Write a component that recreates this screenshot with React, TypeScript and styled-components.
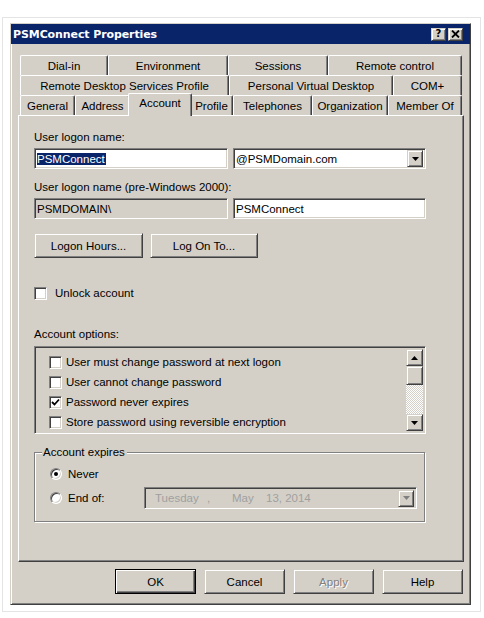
import React from "react";
import styled, { createGlobalStyle, css } from "styled-components";

const FACE = "#d4d0c8";
const SHADOW = "#808080";
const DARK = "#404040";
const NAVY = "#0a246a";

const GlobalStyle = createGlobalStyle`
  html, body {
    margin: 0;
    background: #ffffff;
  }
  body {
    padding: 17px 0 0 2px;
    font-family: "Liberation Sans", Arial, sans-serif;
    font-size: 11.5px;
    color: #000;
  }
`;

const raised = css`
  border: 1px solid;
  border-color: ${FACE} ${DARK} ${DARK} ${FACE};
  box-shadow: inset 1px 1px #ffffff, inset -1px -1px ${SHADOW};
  background: ${FACE};
`;

const sunken = css`
  border: 1px solid;
  border-color: ${SHADOW} #ffffff #ffffff ${SHADOW};
  box-shadow: inset 1px 1px ${DARK}, inset -1px -1px ${FACE};
`;

const Frame = styled.div`
  box-sizing: border-box;
  width: 479px;
  height: 595px;
  border: 1px solid #e4e4e4;
  padding: 5px 9px 6px 7px;
`;

const Dialog = styled.div`
  box-sizing: border-box;
  width: 461px;
  height: 582px;
  display: flex;
  flex-direction: column;
  ${raised};
`;

const TitleBar = styled.div`
  height: 20px;
  background: ${NAVY};
  display: flex;
  align-items: center;
  padding: 0 7px 0 2px;
  flex-shrink: 0;
`;

const Title = styled.span`
  flex: 1;
  color: #fff;
  font-family: "DejaVu Sans", Verdana, sans-serif;
  font-weight: bold;
  font-size: 11px;
  letter-spacing: -0.1px;
`;

const CaptionButton = styled.div`
  box-sizing: border-box;
  width: 15px;
  height: 13px;
  margin-left: 2px;
  display: flex;
  align-items: center;
  justify-content: center;
  font-family: "DejaVu Sans", Verdana, sans-serif;
  font-weight: bold;
  font-size: 10px;
  line-height: 1;
  ${raised};
`;

const Body = styled.div`
  padding: 11px 6px 0 7px;
  display: flex;
  flex-direction: column;
`;

const TabStrip = styled.div`
  margin: 0 2px;
  display: flex;
  flex-direction: column;
`;

const TabRow = styled.div`
  display: flex;
  height: 20px;
`;

const Tab = styled.div<{ $w: number; $active?: boolean }>`
  box-sizing: border-box;
  width: ${(p) => p.$w}px;
  height: 20px;
  display: flex;
  align-items: center;
  justify-content: center;
  white-space: nowrap;
  background: ${FACE};
  border-left: 1px solid #fff;
  border-top: 1px solid #fff;
  border-right: 1px solid ${DARK};
  box-shadow: inset -1px 0 ${SHADOW};
  border-radius: 2px 2px 0 0;
  padding-top: 1px;
  ${(p) =>
    p.$active &&
    css`
      position: relative;
      z-index: 1;
      width: ${p.$w + 4}px;
      height: 23px;
      margin: -2px -2px 0;
      padding-top: 0;
      padding-bottom: 4px;
    `}
`;

const Panel = styled.div`
  box-sizing: border-box;
  height: 447px;
  border: 1px solid;
  border-color: #fff ${DARK} ${DARK} #fff;
  box-shadow: inset -1px -1px ${SHADOW};
  padding: 14px 37px 0 15px;
  display: flex;
  flex-direction: column;
`;

const Label = styled.div<{ $mt?: number }>`
  line-height: 14px;
  height: 14px;
  margin-top: ${(p) => p.$mt ?? 0}px;
  white-space: nowrap;
`;

const FieldRow = styled.div<{ $mt?: number }>`
  display: grid;
  grid-template-columns: 194px 1fr;
  gap: 5px;
  margin-top: ${(p) => p.$mt ?? 0}px;
`;

const Field = styled.div<{ $disabled?: boolean }>`
  box-sizing: border-box;
  height: 21px;
  display: flex;
  align-items: center;
  padding: 0 2px;
  background: ${(p) => (p.$disabled ? FACE : "#fff")};
  white-space: nowrap;
  ${sunken};
`;

const Selected = styled.span`
  background: ${NAVY};
  color: #fff;
  line-height: 16px;
  padding: 0 1px 0 0;
`;

const FieldText = styled.span`
  flex: 1;
`;

const ArrowButton = styled.div<{ $w?: number; $h?: number }>`
  box-sizing: border-box;
  width: ${(p) => p.$w ?? 16}px;
  height: ${(p) => p.$h ?? 17}px;
  display: flex;
  align-items: center;
  justify-content: center;
  flex-shrink: 0;
  ${raised};
`;

const ButtonRow = styled.div<{ $mt: number; $gap: number; $end?: boolean }>`
  display: flex;
  gap: ${(p) => p.$gap}px;
  margin-top: ${(p) => p.$mt}px;
  margin-right: ${(p) => (p.$end ? 1 : 0)}px;
  justify-content: ${(p) => (p.$end ? "flex-end" : "flex-start")};
`;

const Button = styled.div<{ $w: number; $default?: boolean; $disabled?: boolean }>`
  box-sizing: border-box;
  width: ${(p) => p.$w}px;
  height: 25px;
  display: flex;
  align-items: center;
  justify-content: center;
  ${raised};
  ${(p) =>
    p.$default &&
    css`
      border-color: #000;
      box-shadow: inset 1px 1px #fff, inset -1px -1px ${DARK}, inset -2px -2px ${SHADOW};
    `}
  color: ${(p) => (p.$disabled ? SHADOW : "#000")};
  text-shadow: ${(p) => (p.$disabled ? "1px 1px #fff" : "none")};
`;

const CheckRow = styled.div<{ $gap: number; $h: number; $mt?: number }>`
  display: flex;
  align-items: center;
  gap: ${(p) => p.$gap}px;
  height: ${(p) => p.$h}px;
  margin-top: ${(p) => p.$mt ?? 0}px;
  white-space: nowrap;
`;

const Box = styled.div`
  box-sizing: border-box;
  width: 13px;
  height: 13px;
  background: #fff;
  display: flex;
  align-items: center;
  justify-content: center;
  flex-shrink: 0;
  ${sunken};
`;

const ListBox = styled.div`
  box-sizing: border-box;
  height: 88px;
  margin-top: 5px;
  display: flex;
  ${sunken};
  padding: 2px;
`;

const ListItems = styled.div`
  flex: 1;
  padding: 3px 0 0 12px;
`;

const ScrollBar = styled.div`
  width: 17px;
  display: flex;
  flex-direction: column;
`;

const Thumb = styled.div`
  box-sizing: border-box;
  height: 19px;
  ${raised};
`;

const Track = styled.div`
  flex: 1;
  background-color: #fff;
  background-image: conic-gradient(${FACE} 25%, #fff 0 50%, ${FACE} 0 75%, #fff 0);
  background-size: 2px 2px;
`;

const GroupBox = styled.fieldset`
  margin: 11px 1px 0 0;
  padding: 4px 13px 12px 15px;
  border: 1px solid ${SHADOW};
  box-shadow: inset 1px 1px #fff, 1px 1px #fff;
  min-width: 0;
`;

const Legend = styled.legend`
  margin-left: -8px;
  padding: 0 2px 0 1px;
  line-height: 14px;
  background: ${FACE};
`;

const RadioRow = styled.div<{ $mt?: number }>`
  display: grid;
  grid-template-columns: 94px 1fr;
  align-items: center;
  height: 22px;
  margin-top: ${(p) => p.$mt ?? 0}px;
`;

const RadioLabel = styled.div`
  display: flex;
  align-items: center;
  gap: 6px;
`;

const Radio = styled.div`
  box-sizing: border-box;
  width: 12px;
  height: 12px;
  border-radius: 50%;
  background: #fff;
  border: 1px solid;
  border-color: ${SHADOW} #fff #fff ${SHADOW};
  box-shadow: inset 1px 1px ${DARK}, inset -1px -1px ${FACE};
  display: flex;
  align-items: center;
  justify-content: center;
`;

const Dot = styled.div`
  width: 4px;
  height: 4px;
  border-radius: 50%;
  background: #000;
`;

const DatePicker = styled.div`
  box-sizing: border-box;
  height: 22px;
  display: flex;
  align-items: center;
  padding: 0 2px 0 10px;
  background: ${FACE};
  color: #a0a0a0;
  white-space: nowrap;
  ${sunken};
`;

const DatePart = styled.span<{ $w: number }>`
  width: ${(p) => p.$w}px;
  flex-shrink: 0;
`;

const Arrow = ({ up, color = "#000" }: { up?: boolean; color?: string }) => (
  <svg width="7" height="4" viewBox="0 0 7 4">
    <path d={up ? "M3.5 0 L7 4 L0 4 Z" : "M0 0 L7 0 L3.5 4 Z"} fill={color} />
  </svg>
);

const Check = () => (
  <svg width="9" height="9" viewBox="0 0 9 9">
    <path d="M1 4 L3.5 6.5 L8 1.5" fill="none" stroke="#000" strokeWidth="1.8" />
  </svg>
);

const CloseGlyph = () => (
  <svg width="9" height="8" viewBox="0 0 9 8">
    <path d="M1 0.5 L8 7.5 M8 0.5 L1 7.5" stroke="#000" strokeWidth="1.8" />
  </svg>
);

const options = [
  { text: "User must change password at next logon", checked: false },
  { text: "User cannot change password", checked: false },
  { text: "Password never expires", checked: true },
  { text: "Store password using reversible encryption", checked: false },
];

export default function App() {
  return (
    <>
      <GlobalStyle />
      <Frame>
        <Dialog>
          <TitleBar>
            <Title>PSMConnect Properties</Title>
            <CaptionButton>?</CaptionButton>
            <CaptionButton>
              <CloseGlyph />
            </CaptionButton>
          </TitleBar>
          <Body>
            <TabStrip>
              <TabRow>
                <Tab $w={88}>Dial-in</Tab>
                <Tab $w={120}>Environment</Tab>
                <Tab $w={100}>Sessions</Tab>
                <Tab $w={134}>Remote control</Tab>
              </TabRow>
              <TabRow>
                <Tab $w={209}>Remote Desktop Services Profile</Tab>
                <Tab $w={164}>Personal Virtual Desktop</Tab>
                <Tab $w={69}>COM+</Tab>
              </TabRow>
              <TabRow>
                <Tab $w={55}>General</Tab>
                <Tab $w={55}>Address</Tab>
                <Tab $w={60} $active>
                  Account
                </Tab>
                <Tab $w={43}>Profile</Tab>
                <Tab $w={79}>Telephones</Tab>
                <Tab $w={76}>Organization</Tab>
                <Tab $w={74}>Member Of</Tab>
              </TabRow>
            </TabStrip>
            <Panel>
              <Label>User logon name:</Label>
              <FieldRow $mt={4}>
                <Field>
                  <FieldText>
                    <Selected>PSMConnect</Selected>
                  </FieldText>
                </Field>
                <Field>
                  <FieldText>@PSMDomain.com</FieldText>
                  <ArrowButton>
                    <Arrow />
                  </ArrowButton>
                </Field>
              </FieldRow>
              <Label $mt={11}>User logon name (pre-Windows 2000):</Label>
              <FieldRow $mt={4}>
                <Field $disabled>PSMDOMAIN\</Field>
                <Field>PSMConnect</Field>
              </FieldRow>
              <ButtonRow $mt={14} $gap={7}>
                <Button $w={109}>Logon Hours...</Button>
                <Button $w={108}>Log On To...</Button>
              </ButtonRow>
              <CheckRow $gap={8} $h={14} $mt={28}>
                <Box />
                Unlock account
              </CheckRow>
              <Label $mt={27}>Account options:</Label>
              <ListBox>
                <ListItems>
                  {options.map((o) => (
                    <CheckRow key={o.text} $gap={4} $h={20}>
                      <Box>{o.checked && <Check />}</Box>
                      {o.text}
                    </CheckRow>
                  ))}
                </ListItems>
                <ScrollBar>
                  <ArrowButton $w={17}>
                    <Arrow up />
                  </ArrowButton>
                  <Thumb />
                  <Track />
                  <ArrowButton $w={17}>
                    <Arrow />
                  </ArrowButton>
                </ScrollBar>
              </ListBox>
              <GroupBox>
                <Legend>Account expires</Legend>
                <RadioRow>
                  <RadioLabel>
                    <Radio>
                      <Dot />
                    </Radio>
                    Never
                  </RadioLabel>
                </RadioRow>
                <RadioRow $mt={2}>
                  <RadioLabel>
                    <Radio />
                    End of:
                  </RadioLabel>
                  <DatePicker>
                    <DatePart $w={52}>Tuesday</DatePart>
                    <DatePart $w={25}>,</DatePart>
                    <DatePart $w={34}>May</DatePart>
                    <DatePart $w={132}>13, 2014</DatePart>
                    <ArrowButton>
                      <Arrow color={SHADOW} />
                    </ArrowButton>
                  </DatePicker>
                </RadioRow>
              </GroupBox>
            </Panel>
            <ButtonRow $mt={7} $gap={8} $end>
              <Button $w={81} $default>
                OK
              </Button>
              <Button $w={81}>Cancel</Button>
              <Button $w={81} $disabled>
                Apply
              </Button>
              <Button $w={81}>Help</Button>
            </ButtonRow>
          </Body>
        </Dialog>
      </Frame>
    </>
  );
}
